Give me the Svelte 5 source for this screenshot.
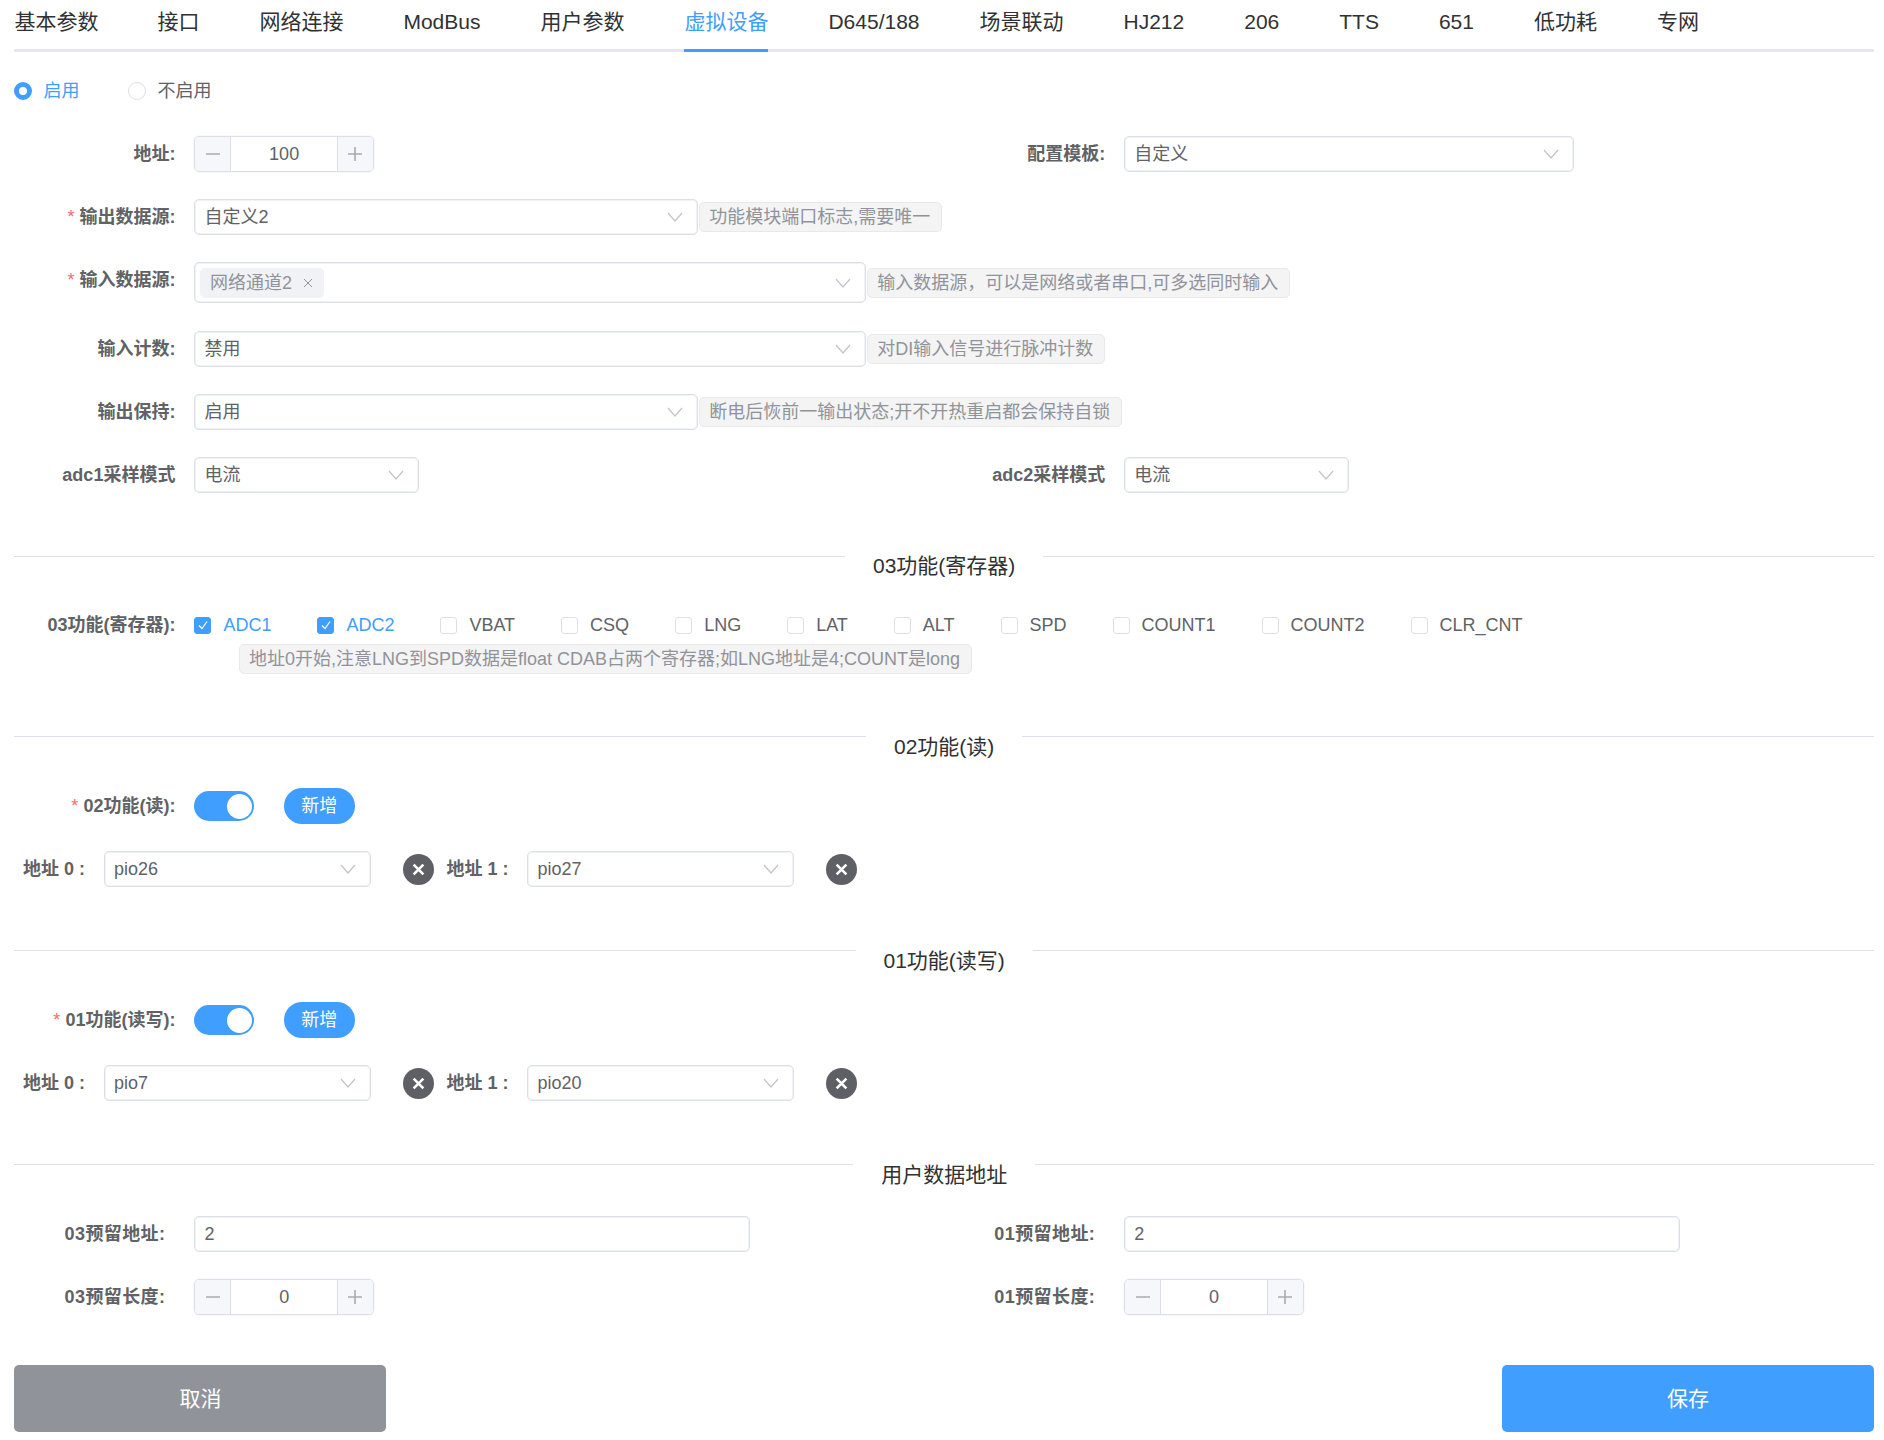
<script>
  const tabs = ['基本参数', '接口', '网络连接', 'ModBus', '用户参数', '虚拟设备', 'D645/188', '场景联动', 'HJ212', '206', 'TTS', '651', '低功耗', '专网'];
  const activeTab = '虚拟设备';
  const registers = [
    { name: 'ADC1', on: true },
    { name: 'ADC2', on: true },
    { name: 'VBAT' },
    { name: 'CSQ' },
    { name: 'LNG' },
    { name: 'LAT' },
    { name: 'ALT' },
    { name: 'SPD' },
    { name: 'COUNT1' },
    { name: 'COUNT2' },
    { name: 'CLR_CNT' }
  ];
  const readPins = ['pio26', 'pio27'];
  const writePins = ['pio7', 'pio20'];
</script>

{#snippet chevron()}
  <svg class="chevron" viewBox="0 0 16 10" width="16" height="10"><path d="M1 1l7 8 7-8" fill="none" stroke="#c0c4cc" stroke-width="1.2" /></svg>
{/snippet}

{#snippet select(value, size)}
  <div class="select {size}"><span>{value}</span>{@render chevron()}</div>
{/snippet}

{#snippet stepper(value)}
  <div class="stepper">
    <span class="step minus"><svg viewBox="0 0 14 14" width="14" height="14"><path d="M0 7h14" stroke="#a8abb2" stroke-width="1.6" /></svg></span>
    <span class="step-value">{value}</span>
    <span class="step plus"><svg viewBox="0 0 14 14" width="14" height="14"><path d="M0 7h14M7 0v14" stroke="#a8abb2" stroke-width="1.6" /></svg></span>
  </div>
{/snippet}

{#snippet divider(title, extra = '')}
  <div class="divider {extra}"><i></i><span>{title}</span><i></i></div>
{/snippet}

{#snippet pins(list)}
  <div class="pins">
    {#each list as pin, i}
      <div class="pin">
        <span class="pin-label">地址 {i} :</span>
        {@render select(pin, 'pin-select')}
        <span class="remove"><svg viewBox="0 0 12 12" width="13" height="13"><path d="M1.5 1.5l9 9M10.5 1.5l-9 9" stroke="#fff" stroke-width="2.4" /></svg></span>
      </div>
    {/each}
  </div>
{/snippet}

{#snippet toggleRow(label)}
  <div class="row">
    <label class="label"><em>*</em> {label}:</label>
    <span class="switch"><b></b></span>
    <button class="add">新增</button>
  </div>
{/snippet}

<div class="page">
  <nav class="tabs">
    {#each tabs as tab}
      <span class="tab" class:active={tab === activeTab}>{tab}</span>
    {/each}
  </nav>

  <div class="radios">
    <span class="radio on"><i></i>启用</span>
    <span class="radio"><i></i>不启用</span>
  </div>

  <div class="row cols first">
    <div class="col">
      <label class="label">地址:</label>
      {@render stepper(100)}
    </div>
    <div class="col">
      <label class="label">配置模板:</label>
      {@render select('自定义', 'template')}
    </div>
  </div>

  <div class="row">
    <label class="label"><em>*</em> 输出数据源:</label>
    {@render select('自定义2', 'mid')}
    <span class="hint">功能模块端口标志,需要唯一</span>
  </div>

  <div class="row multi">
    <label class="label"><em>*</em> 输入数据源:</label>
    <div class="select wide tall">
      <span class="tag">网络通道2<svg viewBox="0 0 10 10" width="10" height="10"><path d="M1 1l8 8M9 1l-8 8" stroke="#909399" stroke-width="1" /></svg></span>
      {@render chevron()}
    </div>
    <span class="hint">输入数据源，可以是网络或者串口,可多选同时输入</span>
  </div>

  <div class="row">
    <label class="label">输入计数:</label>
    {@render select('禁用', 'wide')}
    <span class="hint">对DI输入信号进行脉冲计数</span>
  </div>

  <div class="row">
    <label class="label">输出保持:</label>
    {@render select('启用', 'mid')}
    <span class="hint">断电后恢前一输出状态;开不开热重启都会保持自锁</span>
  </div>

  <div class="row cols">
    <div class="col">
      <label class="label">adc1采样模式</label>
      {@render select('电流', 'short')}
    </div>
    <div class="col">
      <label class="label">adc2采样模式</label>
      {@render select('电流', 'short')}
    </div>
  </div>

  {@render divider('03功能(寄存器)', 'top')}

  <div class="row checks">
    <label class="label">03功能(寄存器):</label>
    {#each registers as reg}
      <span class="check" class:on={reg.on}>
        <i>{#if reg.on}<svg viewBox="0 0 12 12" width="12" height="12"><path d="M2 6.5l3 3 5-7" fill="none" stroke="#fff" stroke-width="1.2" /></svg>{/if}</i>{reg.name}
      </span>
    {/each}
  </div>
  <div class="check-hint"><span class="hint">地址0开始,注意LNG到SPD数据是float CDAB占两个寄存器;如LNG地址是4;COUNT是long</span></div>

  {@render divider('02功能(读)')}
  {@render toggleRow('02功能(读)')}
  {@render pins(readPins)}

  {@render divider('01功能(读写)')}
  {@render toggleRow('01功能(读写)')}
  {@render pins(writePins)}

  {@render divider('用户数据地址')}

  <div class="row cols">
    <div class="col">
      <label class="label pad">03预留地址:</label>
      <div class="text-input">2</div>
    </div>
    <div class="col">
      <label class="label pad">01预留地址:</label>
      <div class="text-input">2</div>
    </div>
  </div>
  <div class="row cols">
    <div class="col">
      <label class="label pad">03预留长度:</label>
      {@render stepper(0)}
    </div>
    <div class="col">
      <label class="label pad">01预留长度:</label>
      {@render stepper(0)}
    </div>
  </div>

  <div class="actions">
    <button class="big cancel">取消</button>
    <button class="big save">保存</button>
  </div>
</div>

<style>
  :global(body) {
    margin: 0;
    background: #fff;
  }

  .page {
    box-sizing: border-box;
    width: 1884px;
    height: 1440px;
    padding: 0 10px 0 14.4px;
    font-family: "Liberation Sans", "Noto Sans CJK SC", sans-serif;
    font-size: 18px;
    line-height: 22px;
    color: #606266;
    overflow: hidden;
  }

  .tabs {
    display: flex;
    gap: 60px;
    height: 49px;
    border-bottom: 3px solid #e4e7ed;
  }

  .tab {
    height: 52px;
    line-height: 44px;
    font-size: 21px;
    color: #303133;
  }

  .tab:first-child {
    margin-right: -1px;
  }

  .tab.active {
    box-sizing: border-box;
    color: #409eff;
    border-bottom: 3px solid #409eff;
  }

  .radios {
    display: flex;
    gap: 49px;
    margin-top: 27px;
    height: 24px;
    line-height: 24px;
  }

  .radio {
    display: flex;
    align-items: center;
    gap: 11px;
  }

  .radio i {
    box-sizing: border-box;
    width: 18px;
    height: 18px;
    border: 1px solid #dcdfe6;
    border-radius: 50%;
  }

  .radio.on {
    color: #409eff;
  }

  .radio.on i {
    border: 5.5px solid #409eff;
  }

  .row {
    display: flex;
    align-items: center;
    height: 36px;
    margin-bottom: 27px;
  }

  .row.first {
    margin-top: 33px;
  }

  .row.multi {
    height: 41px;
    margin-bottom: 28px;
  }

  .row.multi .label {
    align-self: flex-start;
    line-height: 36px;
  }

  .cols .col {
    display: flex;
    align-items: center;
    width: 930px;
  }

  .label {
    flex: none;
    box-sizing: border-box;
    width: 161px;
    margin-right: 19px;
    text-align: right;
    font-weight: 700;
    font-size: 18px;
    color: #606266;
    white-space: nowrap;
  }

  .label.pad {
    padding-right: 10px;
    letter-spacing: 0.4px;
  }

  .label em {
    font-style: normal;
    font-weight: 400;
    color: #f56c6c;
  }

  .select,
  .text-input {
    flex: none;
    box-sizing: border-box;
    display: flex;
    align-items: center;
    justify-content: space-between;
    height: 36px;
    padding: 0 14px 0 9px;
    border: 1px solid #dcdfe6;
    box-shadow: inset 0 0 0 1px #f1f2f6;
    border-radius: 5px;
    background: #fff;
  }

  .text-input {
    width: 555.5px;
  }

  .select.mid { width: 503.8px; }
  .select.wide { width: 671.8px; }
  .select.tall { height: 41px; padding-left: 5px; }
  .select.short { width: 224.8px; }
  .select.template { width: 449.4px; }
  .select.pin-select { width: 267px; }

  .chevron {
    flex: none;
  }

  .tag {
    display: flex;
    align-items: center;
    gap: 11px;
    height: 30px;
    padding: 0 11px 0 9.6px;
    border-radius: 5px;
    background: #f0f2f5;
    color: #909399;
  }

  .hint {
    box-sizing: border-box;
    display: inline-block;
    height: 30px;
    line-height: 28px;
    margin-left: 1px;
    padding: 0 11px 0 9px;
    border: 1px solid #e9e9eb;
    border-radius: 5px;
    background: #f4f4f5;
    color: #909399;
    white-space: nowrap;
  }

  .stepper {
    flex: none;
    box-sizing: border-box;
    display: flex;
    width: 179.5px;
    height: 36px;
    border: 1px solid #dcdfe6;
    box-shadow: 0 0 0 0.5px #f1f2f6;
    border-radius: 5px;
    overflow: hidden;
  }

  .step {
    flex: none;
    display: flex;
    align-items: center;
    justify-content: center;
    width: 35px;
    background: #f5f7fa;
  }

  .minus {
    border-right: 1px solid #dcdfe6;
  }

  .plus {
    border-left: 1px solid #dcdfe6;
  }

  .step-value {
    flex: 1;
    text-align: center;
    line-height: 34px;
  }

  .divider {
    display: flex;
    align-items: flex-start;
    height: 1px;
    margin-top: 63px;
    margin-bottom: 51px;
  }

  .divider.top {
    margin-bottom: 50px;
  }

  .divider i {
    flex: 1;
    height: 1px;
    background: #dcdfe6;
  }

  .divider span {
    padding: 0 28px;
    line-height: 22px;
    font-size: 21px;
    color: #303133;
  }

  .divider.top span {
    margin-top: -1px;
  }

  .checks {
    margin-bottom: 0;
  }

  .check {
    display: flex;
    align-items: center;
    gap: 12px;
    margin-right: 46px;
    white-space: nowrap;
  }

  .check i {
    box-sizing: border-box;
    display: flex;
    align-items: center;
    justify-content: center;
    width: 17px;
    height: 17px;
    border: 1px solid #dcdfe6;
    border-radius: 3px;
  }

  .check.on {
    color: #409eff;
  }

  .check.on i {
    background: #409eff;
    border-color: #409eff;
  }

  .check-hint {
    margin: 1px 0 0 223.6px;
    height: 29px;
  }

  .switch {
    flex: none;
    box-sizing: border-box;
    display: flex;
    justify-content: flex-end;
    align-items: center;
    width: 60px;
    height: 30px;
    padding-right: 2.5px;
    border-radius: 15px;
    background: #409eff;
  }

  .switch b {
    width: 25px;
    height: 25px;
    border-radius: 50%;
    background: #fff;
  }

  .add {
    flex: none;
    width: 71px;
    height: 36px;
    margin-left: 29.4px;
    padding: 0;
    border: 0;
    border-radius: 18px;
    background: #409eff;
    color: #fff;
    font: inherit;
  }

  .pins {
    display: flex;
    padding-left: 8.6px;
    height: 36px;
  }

  .pin {
    display: flex;
    align-items: center;
    width: 423.5px;
  }

  .pin-label {
    flex: none;
    width: 81px;
    font-weight: 700;
    font-size: 18px;
    white-space: nowrap;
  }

  .remove {
    flex: none;
    display: flex;
    align-items: center;
    justify-content: center;
    width: 31px;
    height: 31px;
    margin-left: 32px;
    border-radius: 50%;
    background: #5f6066;
  }

  .actions {
    display: flex;
    justify-content: space-between;
    margin-top: 50px;
  }

  .big {
    width: 372px;
    height: 67px;
    border: 0;
    border-radius: 5px;
    color: #fff;
    font: inherit;
    font-size: 21px;
  }

  .cancel {
    background: #909399;
  }

  .save {
    background: #409eff;
  }
</style>
